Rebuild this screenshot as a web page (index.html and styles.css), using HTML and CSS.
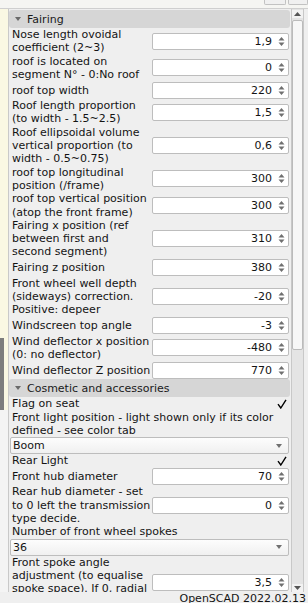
FILE: index.html
```html
<!DOCTYPE html>
<html>
<head>
<meta charset="utf-8">
<link rel="stylesheet" href="styles.css">
</head>
<body>
<div class="app">
  <div class="topbar"><span class="tb tb1"></span><span class="tb tb2"></span></div>
  <div class="main">
    <div class="gutter"><div class="g-yellow"></div><div class="g-dark"></div><div class="g-rest"></div></div>
    <div class="content">
      <div class="ghead"><svg width="6" height="4" viewBox="0 0 6 4"><path d="M0 0H6L3 4Z" fill="#6a6a6a"/></svg><span>Fairing</span></div>

      <div class="row"><div class="label">Nose length ovoidal<br>coefficient (2~3)</div><div class="spin"><span class="val">1,9</span><span class="arrows"><svg width="7" height="11" viewBox="0 0 7 11"><path d="M0.5 4.5L3.5 1L6.5 4.5ZM0.5 6.5L3.5 10L6.5 6.5Z" fill="#707070"/></svg></span></div></div>
      <div class="row"><div class="label">roof is located on<br>segment N° - 0:No roof</div><div class="spin"><span class="val">0</span><span class="arrows"><svg width="7" height="11" viewBox="0 0 7 11"><path d="M0.5 4.5L3.5 1L6.5 4.5ZM0.5 6.5L3.5 10L6.5 6.5Z" fill="#707070"/></svg></span></div></div>
      <div class="row"><div class="label">roof top width</div><div class="spin"><span class="val">220</span><span class="arrows"><svg width="7" height="11" viewBox="0 0 7 11"><path d="M0.5 4.5L3.5 1L6.5 4.5ZM0.5 6.5L3.5 10L6.5 6.5Z" fill="#707070"/></svg></span></div></div>
      <div class="row"><div class="label">Roof length proportion<br>(to width - 1.5~2.5)</div><div class="spin"><span class="val">1,5</span><span class="arrows"><svg width="7" height="11" viewBox="0 0 7 11"><path d="M0.5 4.5L3.5 1L6.5 4.5ZM0.5 6.5L3.5 10L6.5 6.5Z" fill="#707070"/></svg></span></div></div>
      <div class="row"><div class="label">Roof ellipsoidal volume<br>vertical proportion (to<br>width - 0.5~0.75)</div><div class="spin"><span class="val">0,6</span><span class="arrows"><svg width="7" height="11" viewBox="0 0 7 11"><path d="M0.5 4.5L3.5 1L6.5 4.5ZM0.5 6.5L3.5 10L6.5 6.5Z" fill="#707070"/></svg></span></div></div>
      <div class="row"><div class="label">roof top longitudinal<br>position (/frame)</div><div class="spin"><span class="val">300</span><span class="arrows"><svg width="7" height="11" viewBox="0 0 7 11"><path d="M0.5 4.5L3.5 1L6.5 4.5ZM0.5 6.5L3.5 10L6.5 6.5Z" fill="#707070"/></svg></span></div></div>
      <div class="row"><div class="label">roof top vertical position<br>(atop the front frame)</div><div class="spin"><span class="val">300</span><span class="arrows"><svg width="7" height="11" viewBox="0 0 7 11"><path d="M0.5 4.5L3.5 1L6.5 4.5ZM0.5 6.5L3.5 10L6.5 6.5Z" fill="#707070"/></svg></span></div></div>
      <div class="row"><div class="label">Fairing x position (ref<br>between first and<br>second segment)</div><div class="spin"><span class="val">310</span><span class="arrows"><svg width="7" height="11" viewBox="0 0 7 11"><path d="M0.5 4.5L3.5 1L6.5 4.5ZM0.5 6.5L3.5 10L6.5 6.5Z" fill="#707070"/></svg></span></div></div>
      <div class="row"><div class="label">Fairing z position</div><div class="spin"><span class="val">380</span><span class="arrows"><svg width="7" height="11" viewBox="0 0 7 11"><path d="M0.5 4.5L3.5 1L6.5 4.5ZM0.5 6.5L3.5 10L6.5 6.5Z" fill="#707070"/></svg></span></div></div>
      <div class="row"><div class="label">Front wheel well depth<br>(sideways) correction.<br>Positive: depeer</div><div class="spin"><span class="val">-20</span><span class="arrows"><svg width="7" height="11" viewBox="0 0 7 11"><path d="M0.5 4.5L3.5 1L6.5 4.5ZM0.5 6.5L3.5 10L6.5 6.5Z" fill="#707070"/></svg></span></div></div>
      <div class="row"><div class="label">Windscreen top angle</div><div class="spin"><span class="val">-3</span><span class="arrows"><svg width="7" height="11" viewBox="0 0 7 11"><path d="M0.5 4.5L3.5 1L6.5 4.5ZM0.5 6.5L3.5 10L6.5 6.5Z" fill="#707070"/></svg></span></div></div>
      <div class="row"><div class="label">Wind deflector x position<br>(0: no deflector)</div><div class="spin"><span class="val">-480</span><span class="arrows"><svg width="7" height="11" viewBox="0 0 7 11"><path d="M0.5 4.5L3.5 1L6.5 4.5ZM0.5 6.5L3.5 10L6.5 6.5Z" fill="#707070"/></svg></span></div></div>
      <div class="row"><div class="label">Wind deflector Z position</div><div class="spin"><span class="val">770</span><span class="arrows"><svg width="7" height="11" viewBox="0 0 7 11"><path d="M0.5 4.5L3.5 1L6.5 4.5ZM0.5 6.5L3.5 10L6.5 6.5Z" fill="#707070"/></svg></span></div></div>

      <div class="ghead"><svg width="6" height="4" viewBox="0 0 6 4"><path d="M0 0H6L3 4Z" fill="#6a6a6a"/></svg><span>Cosmetic and accessories</span></div>

      <div class="row check"><div class="label">Flag on seat</div><svg class="tick" width="10" height="10" viewBox="0 0 10 10"><path d="M1 5.2L3.8 9L9 0.8" fill="none" stroke="#000" stroke-width="1.4"/></svg></div>
      <div class="flabel">Front light position - light shown only if its color<br>defined - see color tab</div>
      <div class="combo"><span>Boom</span><svg width="6" height="4" viewBox="0 0 6 4"><path d="M0 0H6L3 4Z" fill="#707070"/></svg></div>
      <div class="row check"><div class="label">Rear Light</div><svg class="tick" width="10" height="10" viewBox="0 0 10 10"><path d="M1 5.2L3.8 9L9 0.8" fill="none" stroke="#000" stroke-width="1.4"/></svg></div>
      <div class="row"><div class="label">Front hub diameter</div><div class="spin"><span class="val">70</span><span class="arrows"><svg width="7" height="11" viewBox="0 0 7 11"><path d="M0.5 4.5L3.5 1L6.5 4.5ZM0.5 6.5L3.5 10L6.5 6.5Z" fill="#707070"/></svg></span></div></div>
      <div class="row"><div class="label">Rear hub diameter - set<br>to 0 left the transmission<br>type decide.</div><div class="spin"><span class="val">0</span><span class="arrows"><svg width="7" height="11" viewBox="0 0 7 11"><path d="M0.5 4.5L3.5 1L6.5 4.5ZM0.5 6.5L3.5 10L6.5 6.5Z" fill="#707070"/></svg></span></div></div>
      <div class="flabel">Number of front wheel spokes</div>
      <div class="combo"><span>36</span><svg width="6" height="4" viewBox="0 0 6 4"><path d="M0 0H6L3 4Z" fill="#707070"/></svg></div>
      <div class="row"><div class="label">Front spoke angle<br>adjustment (to equalise<br>spoke space). If 0, radial<br>spokes</div><div class="spin"><span class="val">3,5</span><span class="arrows"><svg width="7" height="11" viewBox="0 0 7 11"><path d="M0.5 4.5L3.5 1L6.5 4.5ZM0.5 6.5L3.5 10L6.5 6.5Z" fill="#707070"/></svg></span></div></div>
    </div>
    <div class="vscroll">
      <div class="sbcol">
        <div class="sb-btn up"><svg width="7" height="4" viewBox="0 0 7 4"><path d="M0 4L3.5 0L7 4Z" fill="#555"/></svg></div>
        <div class="sb-track"><div class="sb-thumb"></div></div>
        <div class="sb-btn down"><svg width="7" height="4" viewBox="0 0 7 4"><path d="M0 0L3.5 4L7 0Z" fill="#555"/></svg></div>
      </div>
    </div>
  </div>
  <div class="status">OpenSCAD 2022.02.13</div>
</div>
</body>
</html>
```
FILE: styles.css
```css
* { box-sizing: border-box; }
html, body { margin: 0; padding: 0; }
body {
  width: 308px;
  height: 603px;
  overflow: hidden;
  font-family: "DejaVu Sans", sans-serif;
  font-size: 11px;
  color: #141414;
  background: #efefef;
}
.app { display: flex; flex-direction: column; height: 603px; }
.topbar {
  height: 9px;
  flex: none;
  background: #f5f5f2;
  border-bottom: 1px solid #cfcfcf;
  display: flex;
  justify-content: flex-end;
  align-items: flex-start;
}
.tb {
  height: 5px;
  border: 1px solid #c2c2c2;
  border-top: none;
  border-radius: 0 0 2px 2px;
  background: #f0f0f0;
}
.tb1 { width: 22px; margin-right: 2px; }
.tb2 { width: 20px; }
.main { flex: 1; display: flex; min-height: 0; }
.gutter {
  width: 9px;
  flex: none;
  display: flex;
  flex-direction: column;
  border-right: 1px solid #c9c9c9;
}
.g-yellow { height: 329px; background: #faf8e3; }
.g-dark { height: 72px; background: linear-gradient(to right, #7d7d7d 0 4px, #faf8e3 4px); }
.g-rest { flex: 1; background: #f4f4f4; }
.content {
  flex: 1;
  min-width: 0;
  padding-top: 1px;
  overflow: hidden;
  background: #efefef;
}
.ghead {
  height: 18px;
  display: flex;
  align-items: center;
  gap: 6px;
  padding-left: 6px;
  background: #d6d6d6;
  border-radius: 3px;
  color: #1a1a1a;
}
.row { display: flex; align-items: center; min-height: 18px; }
.row.check { min-height: 13.3px; }
.label {
  flex: 1;
  padding-left: 3px;
  line-height: 13.3px;
  white-space: nowrap;
  overflow: hidden;
}
.flabel {
  padding-left: 3px;
  line-height: 13.3px;
  white-space: nowrap;
}
.spin {
  width: 137px;
  height: 17px;
  flex: none;
  margin-right: 1px;
  background: #fff;
  border: 1px solid #bdbdbd;
  border-radius: 2px;
  display: flex;
  align-items: center;
}
.spin .val { flex: 1; text-align: right; padding-right: 3px; line-height: 15px; }
.spin .arrows { width: 13px; display: flex; justify-content: center; align-items: center; }
.tick { flex: none; margin-right: 3px; }
.combo {
  height: 17px;
  margin: 0 1px;
  padding-left: 2px;
  border: 1px solid #bdbdbd;
  border-radius: 2px;
  background: linear-gradient(#fdfdfd, #f0f0f0);
  display: flex;
  align-items: center;
  justify-content: space-between;
  padding-right: 6px;
}
.vscroll { width: 18px; flex: none; background: #efefef; padding-left: 1px; display: flex; }
.sbcol {
  width: 13px;
  display: flex;
  flex-direction: column;
  border-left: 1px solid #c8c8c8;
  border-right: 1px solid #c8c8c8;
  background: #e4e4e4;
}
.sb-btn { height: 8px; flex: none; display: flex; justify-content: center; align-items: center; background: #f2f2f2; }
.sb-btn.up { margin-top: 1px; }
.sb-track { flex: 1; padding: 2px 0; }
.sb-thumb {
  height: 330px;
  background: #f7f7f7;
  border: 1px solid #bbbbbb;
  border-radius: 2px;
}
.status {
  height: 11px;
  flex: none;
  background: #efefef;
  text-align: right;
  padding-right: 2px;
  line-height: 13px;
  white-space: nowrap;
  overflow: hidden;
}
```
